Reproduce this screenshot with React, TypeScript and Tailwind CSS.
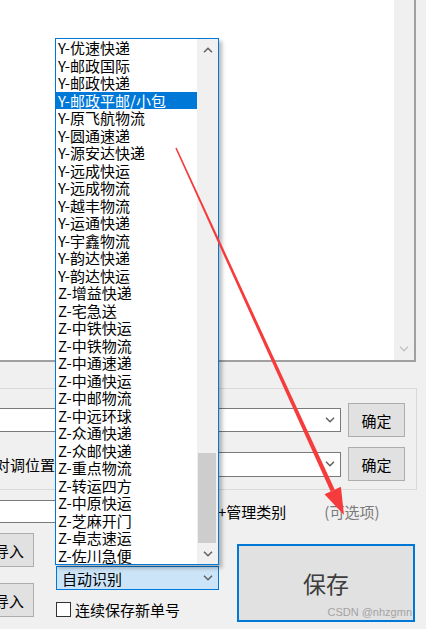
import React from "react";

const items = [
  "Y-优速快递",
  "Y-邮政国际",
  "Y-邮政快递",
  "Y-邮政平邮/小包",
  "Y-原飞航物流",
  "Y-圆通速递",
  "Y-源安达快递",
  "Y-远成快运",
  "Y-远成物流",
  "Y-越丰物流",
  "Y-运通快递",
  "Y-宇鑫物流",
  "Y-韵达快递",
  "Y-韵达快运",
  "Z-增益快递",
  "Z-宅急送",
  "Z-中铁快运",
  "Z-中铁物流",
  "Z-中通速递",
  "Z-中通快运",
  "Z-中邮物流",
  "Z-中远环球",
  "Z-众通快递",
  "Z-众邮快递",
  "Z-重点物流",
  "Z-转运四方",
  "Z-中原快运",
  "Z-芝麻开门",
  "Z-卓志速运",
  "Z-佐川急便",
];

function Chevron({ up = false, color = "#606060", sw = 1.5 }: { up?: boolean; color?: string; sw?: number }) {
  return (
    <svg width={10} height={6} viewBox="0 0 10 6" className="block">
      <path d={up ? "M1 5.2L5 1.2L9 5.2" : "M1 0.8L5 4.8L9 0.8"} fill="none" stroke={color} strokeWidth={sw} />
    </svg>
  );
}

export default function App() {
  return (
    <div className="relative w-[426px] h-[629px] overflow-hidden bg-[#f0f0f0] text-[15px] leading-none text-black font-['Noto_Sans_CJK_SC','Noto_Sans',sans-serif]">
      {/* big list box */}
      <div className="flex h-[362px] w-[416px] border-r-2 border-b-2 border-[#a0a0a0] bg-white">
        <div className="flex-1" />
        <div className="flex w-[20px] flex-col items-center justify-end bg-[#f0f0f0] pb-[8px]">
          <Chevron color="#c4c4c4" />
        </div>
      </div>

      {/* group box */}
      <div className="mt-[26px] flex h-[102px] w-[417px] flex-col border-t border-r border-b border-[#d9d9d9]">
        <div className="mt-[14px] flex h-[34px] items-center">
          <div className="flex h-[24px] w-[341px] items-center justify-end border border-l-0 border-[#7a7a7a] bg-white pr-[5px]">
            <Chevron />
          </div>
          <div className="ml-[7px] flex h-[34px] w-[57px] items-center justify-center border border-[#adadad] bg-[#e1e1e1]">
            确定
          </div>
        </div>
        <div className="mt-[10px] flex h-[34px] items-center">
          <span className="ml-[-5px] w-[65px] shrink-0 whitespace-nowrap">对调位置</span>
          <div className="flex h-[25px] w-[281px] items-center justify-end border border-[#7a7a7a] bg-white pr-[5px]">
            <Chevron />
          </div>
          <div className="ml-[7px] flex h-[34px] w-[57px] items-center justify-center border border-[#adadad] bg-[#e1e1e1]">
            确定
          </div>
        </div>
      </div>

      {/* row 3 */}
      <div className="mt-[10px] flex h-[23px] items-center">
        <div className="h-[23px] w-[200px] border border-l-0 border-[#7a7a7a] bg-white" />
        <span className="ml-[18px] whitespace-nowrap">+管理类别</span>
        <span className="ml-[38px] whitespace-nowrap text-[#7a7a7a]">(可选项)</span>
      </div>

      {/* lower section */}
      <div className="mt-[10px] flex">
        <div className="flex w-[34px] flex-col gap-[16px]">
          <div className="flex h-[34px] items-center border border-l-0 border-[#adadad] bg-[#e1e1e1]">
            <span className="ml-[-6px] whitespace-nowrap">导入</span>
          </div>
          <div className="flex h-[34px] items-center border border-l-0 border-[#adadad] bg-[#e1e1e1]">
            <span className="ml-[-6px] whitespace-nowrap">导入</span>
          </div>
        </div>
        <div className="ml-[22px] flex w-[163px] flex-col">
          <div className="mt-[33px] flex h-[24px] items-center justify-between border border-[#0078d7] bg-[#cce4f7] pl-[5px] pr-[5px]">
            <span>自动识别</span>
            <Chevron />
          </div>
          <div className="mt-[12px] flex items-center">
            <div className="h-[15px] w-[15px] border border-[#333333] bg-white" />
            <span className="ml-[4px] whitespace-nowrap">连续保存新单号</span>
          </div>
        </div>
        <div className="ml-[18px] mt-[11px] flex h-[78px] w-[178px] items-center justify-center border-2 border-[#0078d7] bg-[#e1e1e1] text-[23px] text-[#3c3c3c]">
          保存
        </div>
      </div>

      {/* dropdown popup */}
      <div className="absolute left-[55px] top-[38px] flex h-[527px] w-[164px] border border-[#0078d7] bg-white shadow-[3px_3px_4px_rgba(0,0,0,0.28)]">
        <div className="flex w-[141px] flex-col">
          {items.map((t, i) => (
            <div
              key={t}
              className={
                i === 3
                  ? "h-[17.5px] whitespace-nowrap bg-[#0078d7] pl-[2px] leading-[17.5px] text-white"
                  : "h-[17.5px] whitespace-nowrap pl-[2px] leading-[17.5px]"
              }
            >
              {t}
            </div>
          ))}
        </div>
        <div className="flex w-[21px] flex-col bg-[#f0f0f0]">
          <div className="flex h-[21px] items-center justify-center">
            <Chevron up />
          </div>
          <div className="flex flex-1 flex-col justify-end">
            <div className="ml-[1px] h-[90px] w-[18px] bg-[#cdcdcd]" />
          </div>
          <div className="flex h-[21px] items-center justify-center">
            <Chevron />
          </div>
        </div>
      </div>

      {/* watermark */}
      <div className="absolute right-[14px] top-[607px] whitespace-nowrap font-['Liberation_Sans',Arial,sans-serif] text-[11px] leading-none text-[#a3a3a3]">
        CSDN @nhzgmn
      </div>

      {/* red arrow annotation */}
      <svg className="pointer-events-none absolute left-0 top-0" width={426} height={629} viewBox="0 0 426 629">
        <polygon points="176.7,147.7 334.7,489.6 330.7,491.4 175.3,148.3" fill="#f53b3b" />
        <polygon points="344,515 340.9,486.7 324.5,494.3" fill="#f53b3b" />
      </svg>
    </div>
  );
}
